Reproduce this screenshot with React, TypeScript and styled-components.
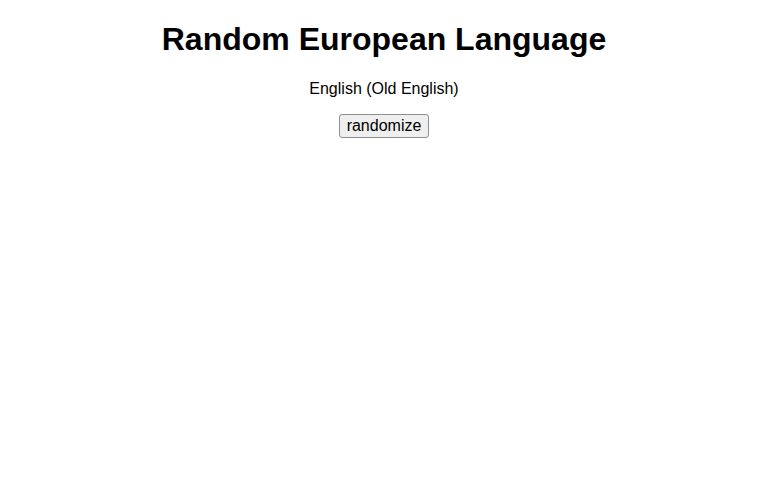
import styled, { createGlobalStyle } from "styled-components";
import { useState } from "react";

const GlobalStyle = createGlobalStyle`
  body {
    margin: 8px;
    font-family: "Liberation Sans", Arial, sans-serif;
    background: #fff;
    color: #000;
  }
`;

const Page = styled.div`
  display: flex;
  flex-direction: column;
  align-items: center;
  text-align: center;
`;

const Title = styled.h1`
  font-size: 32px;
  font-weight: bold;
  margin: 13px 0 0;
`;

const Language = styled.p`
  font-size: 16px;
  margin: 22px 0 16px;
`;

const RandomizeButton = styled.button`
  font-family: "Liberation Sans", Arial, sans-serif;
  font-size: 16px;
  padding: 2px 7px;
  color: #000;
  background: #efefef;
  border: 1px solid #8f8f8f;
  border-radius: 3px;
`;

const languages = [
  "English (Old English)",
  "French",
  "German",
  "Italian",
  "Spanish",
  "Portuguese",
  "Dutch",
  "Polish",
];

export default function App() {
  const [lang, setLang] = useState(languages[0]);
  const randomize = () =>
    setLang(languages[Math.floor(Math.random() * languages.length)]);
  return (
    <>
      <GlobalStyle />
      <Page>
        <Title>Random European Language</Title>
        <Language>{lang}</Language>
        <RandomizeButton onClick={randomize}>randomize</RandomizeButton>
      </Page>
    </>
  );
}
